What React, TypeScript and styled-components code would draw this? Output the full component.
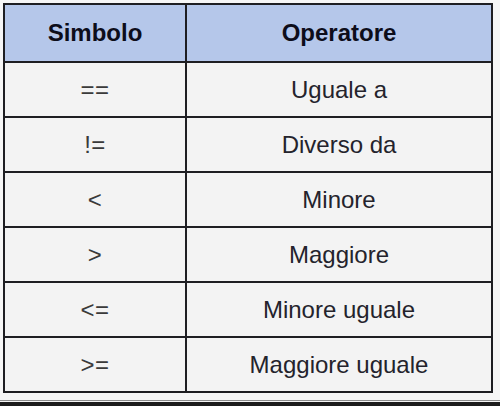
import React from "react";
import styled, { createGlobalStyle } from "styled-components";

const Global = createGlobalStyle`
  html, body { margin: 0; padding: 0; background: #f6f6f6; }
  body { font-family: "Liberation Sans", Arial, sans-serif; }
`;

const Page = styled.div`
  width: 500px;
  height: 406px;
  display: flex;
  flex-direction: column;
  overflow: hidden;
`;

const TableWrap = styled.div`
  padding: 3px 7px 0 3px;
`;

const Grid = styled.div`
  display: grid;
  grid-template-columns: 180px 304px;
  grid-template-rows: 56px repeat(6, 53px);
  gap: 2px;
  padding: 2px;
  background: #1e1e22;
`;

const Cell = styled.div<{ $head?: boolean; $sym?: boolean }>`
  display: flex;
  align-items: center;
  justify-content: center;
  background: ${(p) => (p.$head ? "#b5c7ea" : "#f3f3f3")};
  color: ${(p) => (p.$head ? "#0d0d1a" : p.$sym ? "#3a3a3a" : "#24232c")};
  font-size: 24px;
  font-weight: ${(p) => (p.$head ? 700 : 400)};
  letter-spacing: ${(p) => (p.$sym ? "0.5px" : "0")};
`;

const Footer = styled.div`
  margin-top: 7px;
  border-top: 1px solid #8d8d8d;
  padding-top: 1px;
  flex: 1;
  display: flex;
`;

const DarkBand = styled.div`
  flex: 1;
  background: #1c1c1c;
`;

const rows: [string, string][] = [
  ["==", "Uguale a"],
  ["!=", "Diverso da"],
  ["<", "Minore"],
  [">", "Maggiore"],
  ["<=", "Minore uguale"],
  [">=", "Maggiore uguale"],
];

export default function App() {
  return (
    <Page>
      <Global />
      <TableWrap>
        <Grid>
          <Cell $head>Simbolo</Cell>
          <Cell $head>Operatore</Cell>
          {rows.map(([s, o]) => (
            <React.Fragment key={s}>
              <Cell $sym>{s}</Cell>
              <Cell>{o}</Cell>
            </React.Fragment>
          ))}
        </Grid>
      </TableWrap>
      <Footer>
        <DarkBand />
      </Footer>
    </Page>
  );
}
